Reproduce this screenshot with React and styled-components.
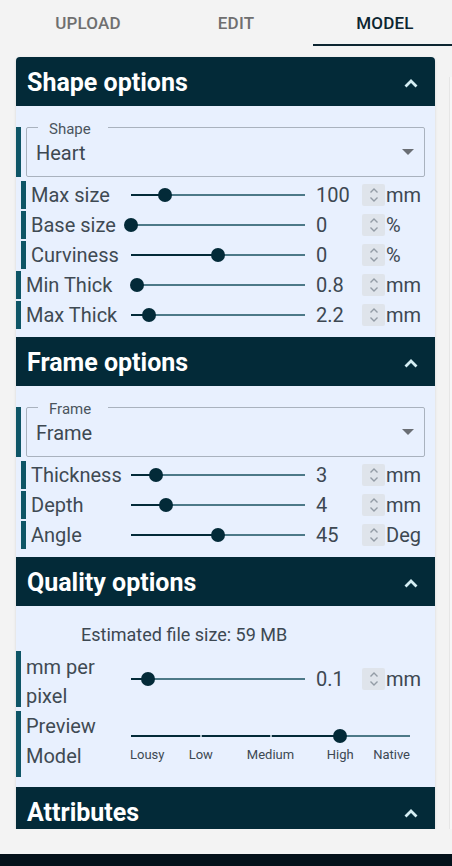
import React from "react";
import styled, { createGlobalStyle } from "styled-components";

const GlobalStyle = createGlobalStyle`
  html, body {
    margin: 0;
    padding: 0;
    background: #f3f3f3;
    overflow: hidden;
  }
  body {
    font-family: Roboto, "Liberation Sans", Arial, sans-serif;
  }
  * {
    box-sizing: border-box;
  }
`;

const shapeRows = [
  { label: "Max size", value: "100", unit: "mm", pos: 0.195, indent: true },
  { label: "Base size", value: "0", unit: "%", pos: 0, indent: true },
  { label: "Curviness", value: "0", unit: "%", pos: 0.5, indent: true },
  { label: "Min Thick", value: "0.8", unit: "mm", pos: 0.035 },
  { label: "Max Thick", value: "2.2", unit: "mm", pos: 0.103 },
];

const frameRows = [
  { label: "Thickness", value: "3", unit: "mm", pos: 0.144, indent: true },
  { label: "Depth", value: "4", unit: "mm", pos: 0.2, indent: true },
  { label: "Angle", value: "45", unit: "Deg", pos: 0.5, indent: true },
];

const qualityMarks = ["Lousy", "Low", "Medium", "High", "Native"];

const ChevronUp = () => (
  <svg width="16" height="12" viewBox="0 0 16 12">
    <polyline
      points="2.5,9.5 8,4 13.5,9.5"
      fill="none"
      stroke="#d4eef3"
      strokeWidth="2.8"
    />
  </svg>
);

const SpinIcon = () => (
  <svg width="12" height="18" viewBox="0 0 12 18">
    <polyline points="2.5,6.5 6,3 9.5,6.5" fill="none" stroke="#939ca6" strokeWidth="1.4" />
    <polyline points="2.5,11.5 6,15 9.5,11.5" fill="none" stroke="#939ca6" strokeWidth="1.4" />
  </svg>
);

const SliderRow = ({ label, value, unit, pos, indent, tall }) => (
  <Row $indent={indent} $tall={tall}>
    <Label $indent={indent} $tall={tall}>
      {label}
    </Label>
    <Track>
      <Fill style={{ width: `${pos * 100}%` }} />
      <Thumb style={{ left: `${pos * 100}%` }} />
    </Track>
    <Value>{value}</Value>
    <Spinner>
      <SpinIcon />
    </Spinner>
    <Unit>{unit}</Unit>
  </Row>
);

const SelectField = ({ legend, value }) => (
  <SelectRow>
    <SelectBox>
      <Legend>{legend}</Legend>
      <SelectValue>{value}</SelectValue>
      <Caret />
    </SelectBox>
  </SelectRow>
);

const Section = ({ title, children }) => (
  <>
    <Header>
      {title}
      <ChevronUp />
    </Header>
    {children}
  </>
);

export default function App() {
  const highPos = 0.75;
  return (
    <Page>
      <GlobalStyle />
      <Tabs>
        <Tab>Upload</Tab>
        <Tab>Edit</Tab>
        <Tab $active>Model</Tab>
      </Tabs>
      <ScrollArea>
        <Panel>
          <Section title="Shape options">
            <Content>
              <SelectField legend="Shape" value="Heart" />
              {shapeRows.map((r) => (
                <SliderRow key={r.label} {...r} />
              ))}
            </Content>
          </Section>
          <Section title="Frame options">
            <Content>
              <SelectField legend="Frame" value="Frame" />
              {frameRows.map((r) => (
                <SliderRow key={r.label} {...r} />
              ))}
            </Content>
          </Section>
          <Section title="Quality options">
            <Content $top={8} $bottom={10}>
              <Estimate>Estimated file size: 59 MB</Estimate>
              <SliderRow
                label={
                  <>
                    mm per
                    <br />
                    pixel
                  </>
                }
                value="0.1"
                unit="mm"
                pos={0.098}
                tall
              />
              <PreviewRow>
                <PreviewLabel>
                  Preview
                  <br />
                  Model
                </PreviewLabel>
                <MarkSlider>
                  <WideTrack>
                    <Fill style={{ width: `${highPos * 100}%` }} />
                    {[0.25, 0.5].map((p) => (
                      <Tick key={p} style={{ left: `${p * 100}%` }} />
                    ))}
                    <Thumb style={{ left: `${highPos * 100}%` }} />
                  </WideTrack>
                  <MarkLabels>
                    {qualityMarks.map((m, i) => (
                      <MarkLabel
                        key={m}
                        $edge={i === 0 ? "start" : i === qualityMarks.length - 1 ? "end" : ""}
                        style={{ left: `${(i / (qualityMarks.length - 1)) * 100}%` }}
                      >
                        {m}
                      </MarkLabel>
                    ))}
                  </MarkLabels>
                </MarkSlider>
              </PreviewRow>
            </Content>
          </Section>
          <Section title="Attributes">
            <Content />
          </Section>
        </Panel>
        <ScrollTrack />
      </ScrollArea>
      <Spacer />
      <BottomBar />
    </Page>
  );
}

const Page = styled.div`
  height: 866px;
  display: flex;
  flex-direction: column;
  background: #f3f3f3;
`;

const Tabs = styled.div`
  display: flex;
  height: 46px;
  padding-left: 14px;
  flex-shrink: 0;
`;

const Tab = styled.div`
  width: 148px;
  flex-shrink: 0;
  display: flex;
  align-items: center;
  justify-content: center;
  text-transform: uppercase;
  font-size: 17px;
  font-weight: 500;
  letter-spacing: 0.2px;
  color: ${(p) => (p.$active ? "#0c2530" : "#6f6f6f")};
  border-bottom: 2px solid ${(p) => (p.$active ? "#0c2530" : "transparent")};
  padding-top: 1px;
  ${(p) => p.$active && "width: 156px; margin-left: 3px; padding-right: 12px;"}
`;

const ScrollArea = styled.div`
  position: relative;
  height: 783px;
  flex-shrink: 0;
  overflow: hidden;
  padding: 11px 17px 0 16px;
`;

const ScrollTrack = styled.div`
  position: absolute;
  right: 0;
  top: 31px;
  bottom: 0;
  width: 3px;
  background: #f7f7f7;
  border-left: 1px solid #e6e6e6;
`;

const Panel = styled.div`
  background: #e8f0fe;
  border-radius: 4px 4px 0 0;
  overflow: hidden;
  box-shadow: 0 1px 3px rgba(0, 0, 0, 0.12);
`;

const Header = styled.div`
  height: 49px;
  display: flex;
  align-items: center;
  justify-content: space-between;
  padding: 2px 16px 0 11px;
  background: #032a38;
  color: #ffffff;
  font-size: 25px;
  font-weight: 700;
`;

const Content = styled.div`
  padding: ${(p) => p.$top ?? 21}px 10px ${(p) => p.$bottom ?? 6}px 0;
`;

const SelectRow = styled.div`
  display: flex;
  border-left: 5px solid #0e5566;
  padding-left: 5px;
  margin-bottom: 4px;
`;

const SelectBox = styled.div`
  position: relative;
  flex: 1;
  height: 50px;
  border: 1px solid #a9b2be;
  border-radius: 2px;
  display: flex;
  align-items: center;
  padding: 0 10px 0 9px;
`;

const Legend = styled.span`
  position: absolute;
  top: -7px;
  left: 11px;
  padding: 0 17px 0 11px;
  background: #e8f0fe;
  font-size: 15px;
  line-height: 17px;
  color: #4a545d;
`;

const SelectValue = styled.div`
  flex: 1;
  font-size: 20px;
  color: #3d4852;
  padding-top: 2px;
`;

const Caret = styled.div`
  width: 0;
  height: 0;
  border-left: 6px solid transparent;
  border-right: 6px solid transparent;
  border-top: 6px solid #6a6e74;
`;

const Row = styled.div`
  display: flex;
  align-items: center;
  height: ${(p) => (p.$tall ? 56 : 28)}px;
  margin: 0 0 ${(p) => (p.$tall ? 4 : 2)}px ${(p) => (p.$indent ? 5 : 0)}px;
  border-left: 5px solid #0e5566;
`;

const Label = styled.div`
  width: ${(p) => (p.$indent ? 105 : 110)}px;
  flex-shrink: 0;
  padding: ${(p) => (p.$tall ? 6 : 0)}px 0 0 5px;
  font-size: 20px;
  line-height: 29px;
  color: #3f4a53;
  white-space: nowrap;
`;

const Track = styled.div`
  position: relative;
  width: 174px;
  height: 2px;
  flex-shrink: 0;
  background: #4d7988;
`;

const WideTrack = styled(Track)`
  width: 279px;
`;

const Fill = styled.div`
  height: 100%;
  background: #032a38;
`;

const Thumb = styled.div`
  position: absolute;
  top: 50%;
  width: 14px;
  height: 14px;
  margin: -7px 0 0 -7px;
  border-radius: 50%;
  background: #032a38;
`;

const Tick = styled.div`
  position: absolute;
  top: 0;
  width: 2px;
  height: 2px;
  margin-left: -1px;
  background: #a9bcc4;
`;

const Value = styled.div`
  width: 46px;
  margin-left: 11px;
  font-size: 20px;
  color: #3d4852;
`;

const Spinner = styled.div`
  width: 23px;
  height: 22px;
  border-radius: 2px;
  background: #dfe4eb;
  display: flex;
  align-items: center;
  justify-content: center;
`;

const Unit = styled.div`
  margin-left: 1px;
  font-size: 20px;
  color: #3d4852;
`;

const Estimate = styled.div`
  padding: 10px 0 0 65px;
  height: 37px;
  font-size: 18px;
  line-height: 22px;
  color: #3d4852;
`;

const PreviewRow = styled.div`
  display: flex;
  align-items: flex-start;
  height: 66px;
  border-left: 5px solid #0e5566;
`;

const PreviewLabel = styled.div`
  width: 110px;
  flex-shrink: 0;
  padding-left: 5px;
  font-size: 20px;
  line-height: 30px;
  color: #3f4a53;
`;

const MarkSlider = styled.div`
  padding-top: 24px;
`;

const MarkLabels = styled.div`
  position: relative;
  height: 16px;
  margin-top: 10px;
`;

const MarkLabel = styled.span`
  position: absolute;
  top: 0;
  font-size: 13px;
  line-height: 15px;
  color: #3d4852;
  white-space: nowrap;
  transform: translateX(
    ${(p) => (p.$edge === "start" ? "-3%" : p.$edge === "end" ? "-100%" : "-50%")}
  );
`;

const Spacer = styled.div`
  height: 25px;
  flex-shrink: 0;
`;

const BottomBar = styled.div`
  height: 12px;
  flex-shrink: 0;
  background: #04111a;
`;
